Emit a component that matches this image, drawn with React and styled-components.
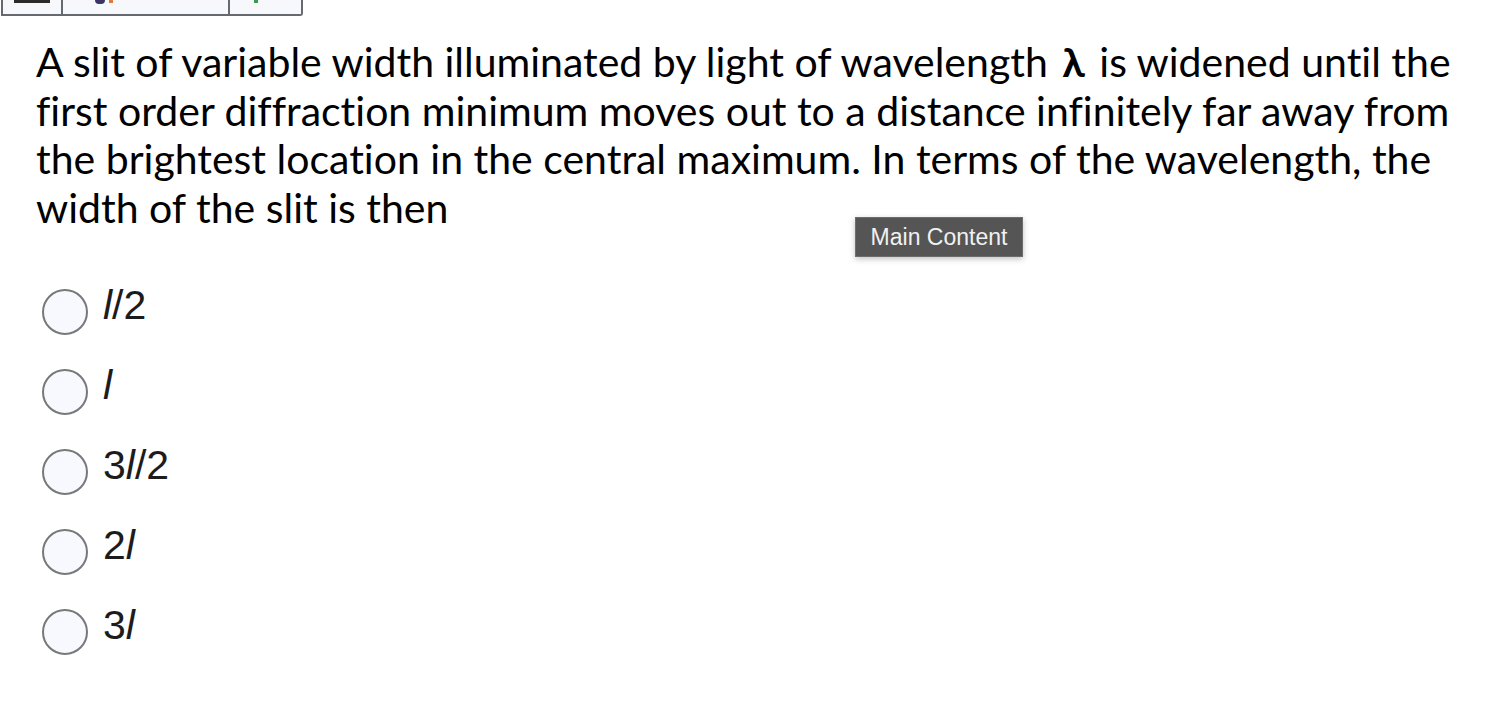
import React from "react";
import styled, { createGlobalStyle } from "styled-components";

const Global = createGlobalStyle`
	html, body {
		margin: 0;
		padding: 0;
		background: #ffffff;
	}
	body {
		font-family: Lato, "Noto Sans", sans-serif;
		color: #000;
	}
`;

const Page = styled.div`
	position: relative;
	width: 1502px;
	height: 710px;
	overflow: hidden;
`;

const Toolbar = styled.div`
	display: flex;
	width: 298px;
	height: 14px;
	margin-left: 1px;
	background: #f7f8fc;
	border: 2px solid #656a70;
	border-top: none;
	border-bottom-right-radius: 3px;
`;

const Segment = styled.div`
	position: relative;
	width: ${props => props.width}px;
	flex: ${props => (props.grow ? 1 : "none")};
	border-right: ${props => (props.last ? "none" : "2px solid #656a70")};
`;

const Bit = styled.span`
	position: absolute;
	top: 0;
	left: ${props => props.left}px;
	width: ${props => props.w}px;
	height: ${props => props.h}px;
	background: ${props => props.color};
	border-radius: ${props => props.round || 0};
`;

const Question = styled.p`
	margin: 0;
	width: 1440px;
	padding: 22px 0 0 36px;
	font-size: 41px;
	line-height: 48.6px;
	font-variant-ligatures: none;
	font-feature-settings: "liga" 0;
`;

const Lambda = styled.span`
	font-weight: 700;
	margin: 0 4px;
`;

const Options = styled.ul`
	list-style: none;
	margin: 0;
	padding: 57px 0 0 42px;
	display: flex;
	flex-direction: column;
	gap: 34px;
`;

const Option = styled.li`
	display: flex;
	align-items: flex-start;
	height: 46px;
`;

const Radio = styled.span`
	flex: none;
	width: 42px;
	height: 42px;
	border: 2px solid #76787a;
	border-radius: 50%;
	background: #f8f9fe;
`;

const Label = styled.span`
	margin-left: 15px;
	margin-top: -4px;
	font-family: "Liberation Sans", Arial, sans-serif;
	font-size: 41px;
	line-height: 40px;
	color: #1c1c1c;

	i {
		font-style: italic;
	}
`;

const Tooltip = styled.div`
	position: absolute;
	left: 855px;
	top: 217px;
	width: 168px;
	height: 40px;
	box-sizing: border-box;
	display: flex;
	align-items: center;
	justify-content: center;
	background: #555555;
	border: 1px solid #6d6d6d;
	color: #f1f1f1;
	font-family: "Liberation Sans", Arial, sans-serif;
	font-size: 23px;
	box-shadow: 0 2px 6px rgba(0, 0, 0, 0.25);
`;

const options = [
	["", "l", "/2"],
	["", "l", ""],
	["3", "l", "/2"],
	["2", "l", ""],
	["3", "l", ""],
];

const App = () => (
	<Page>
		<Global />
		<Toolbar>
			<Segment width={58}>
				<Bit left={11} w={36} h={3} color="#2b2b2b" />
			</Segment>
			<Segment width={165}>
				<Bit left={32} w={10} h={4} color="#3b3468" round="0 0 5px 5px" />
				<Bit left={46} w={4} h={3} color="#e07a3c" />
			</Segment>
			<Segment grow last>
				<Bit left={24} w={4} h={3} color="#3e9a4a" />
			</Segment>
		</Toolbar>

		<Question>
			A slit of variable width illuminated by light of wavelength <Lambda>λ</Lambda> is widened
			until the first order diffraction minimum moves out to a distance infinitely far away from
			the brightest location in the central maximum. In terms of the wavelength, the width of the
			slit is then
		</Question>

		<Options>
			{options.map(([pre, l, post], i) => (
				<Option key={i}>
					<Radio />
					<Label>
						{pre}
						<i>{l}</i>
						{post}
					</Label>
				</Option>
			))}
		</Options>

		<Tooltip>Main Content</Tooltip>
	</Page>
);

export default App;
